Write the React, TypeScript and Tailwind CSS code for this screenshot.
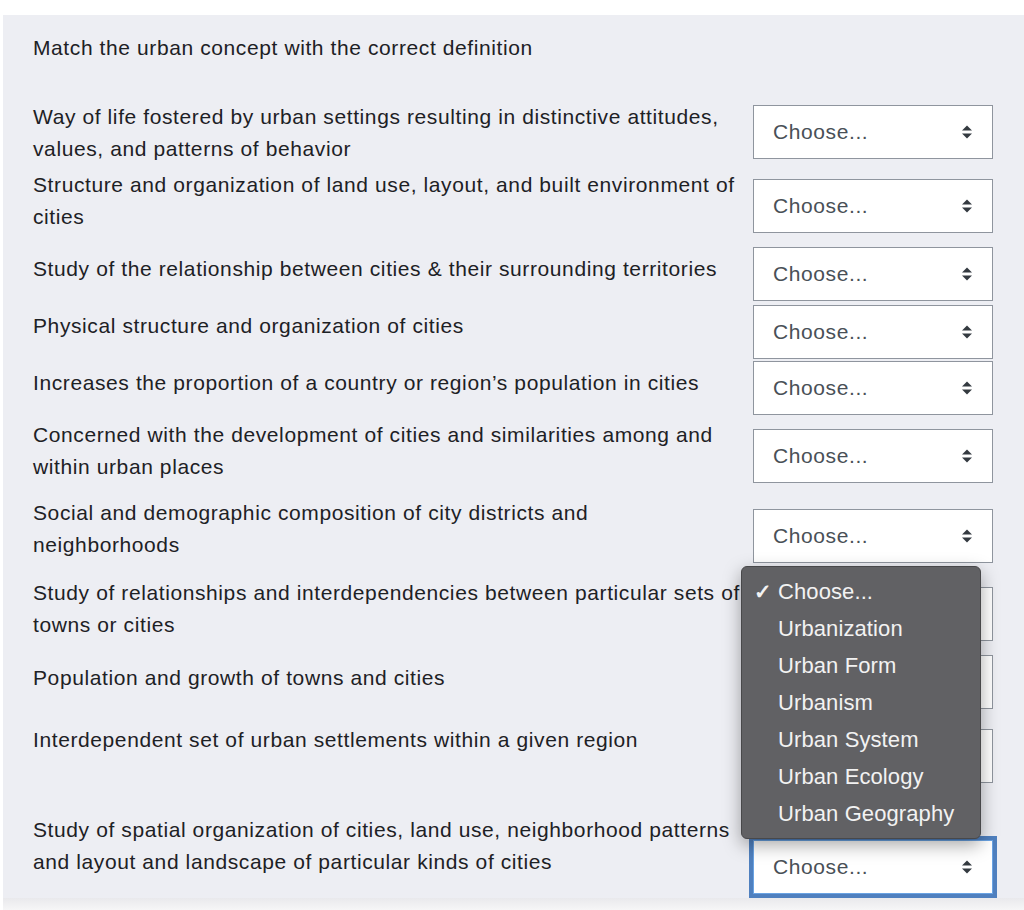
import React from "react";

type Row = {
  lines: string[];
  h: string;
  tm: string;
  sm: string;
  focused?: boolean;
};

const rows: Row[] = [
  {
    lines: [
      "Way of life fostered by urban settings resulting in distinctive attitudes,",
      "values, and patterns of behavior",
    ],
    h: "h-[68px]",
    tm: "mt-0",
    sm: "mt-[4px]",
  },
  {
    lines: [
      "Structure and organization of land use, layout, and built environment of",
      "cities",
    ],
    h: "h-[78px]",
    tm: "mt-0",
    sm: "mt-[10px]",
  },
  {
    lines: ["Study of the relationship between cities & their surrounding territories"],
    h: "h-[58px]",
    tm: "mt-[6px]",
    sm: "mt-0",
  },
  {
    lines: ["Physical structure and organization of cities"],
    h: "h-[56px]",
    tm: "mt-[5px]",
    sm: "mt-0",
  },
  {
    lines: ["Increases the proportion of a country or region\u2019s population in cities"],
    h: "h-[58px]",
    tm: "mt-[6px]",
    sm: "mt-0",
  },
  {
    lines: [
      "Concerned with the development of cities and similarities among and",
      "within urban places",
    ],
    h: "h-[78px]",
    tm: "mt-0",
    sm: "mt-[10px]",
  },
  {
    lines: ["Social and demographic composition of city districts and", "neighborhoods"],
    h: "h-[80px]",
    tm: "mt-0",
    sm: "mt-[12px]",
  },
  {
    lines: [
      "Study of relationships and interdependencies between particular sets of",
      "towns or cities",
    ],
    h: "h-[78px]",
    tm: "mt-0",
    sm: "mt-[10px]",
  },
  {
    lines: ["Population and growth of towns and cities"],
    h: "h-[69px]",
    tm: "mt-[7px]",
    sm: "mt-0",
  },
  {
    lines: ["Interdependent set of urban settlements within a given region"],
    h: "h-[90px]",
    tm: "mt-0",
    sm: "mt-[5px]",
  },
  {
    lines: [
      "Study of spatial organization of cities, land use, neighborhood patterns",
      "and layout and landscape of particular kinds of cities",
    ],
    h: "h-[84px]",
    tm: "mt-0",
    sm: "mt-[26px]",
    focused: true,
  },
];

const options = [
  "Choose...",
  "Urbanization",
  "Urban Form",
  "Urbanism",
  "Urban System",
  "Urban Ecology",
  "Urban Geography",
];

const Arrows = () => (
  <svg width="12" height="16" viewBox="0 0 12 16" className="shrink-0">
    <path d="M6 1.5 L11 6.5 H1 Z" fill="#343a40" />
    <path d="M6 14.5 L11 9.5 H1 Z" fill="#343a40" />
  </svg>
);

const SelectBox = ({ focused }: { focused?: boolean }) => (
  <div
    className={`w-[240px] h-[54px] bg-white flex items-center justify-between pl-[19px] pr-[19px] text-[21px] tracking-[0.6px] text-[#495057] ${
      focused
        ? "border border-[#6aa3e3] shadow-[0_0_0_4px_#4f80bf]"
        : "border border-[#8f959e]"
    }`}
  >
    <span>Choose...</span>
    <Arrows />
  </div>
);

export default function App() {
  return (
    <div className="bg-white w-[1024px] h-[910px] overflow-hidden font-['Liberation_Sans',Arial,sans-serif]">
      <div className="ml-[3px] mt-[15px] h-[883px] bg-[#edeef3] relative pl-[30px] pt-[17px] text-[#1d2125]">
        <p className="text-[21px] tracking-[0.6px] leading-[32px] whitespace-nowrap">
          Match the urban concept with the correct definition
        </p>

        <div className="mt-[37px] flex flex-col">
          {rows.map((r, i) => (
            <div key={i} className={`flex items-start ${r.h}`}>
              <div
                className={`w-[720px] text-[21px] tracking-[0.6px] leading-[32px] ${r.tm}`}
              >
                {r.lines.map((l, j) => (
                  <div key={j} className="whitespace-nowrap">
                    {l}
                  </div>
                ))}
              </div>
              <div className={r.sm}>
                <SelectBox focused={r.focused} />
              </div>
            </div>
          ))}
        </div>

        {/* open native popup for the last select */}
        <div className="absolute left-[738px] top-[551px] w-[240px] py-[6px] rounded-[6px] bg-[#616164] border border-[#48484a] shadow-[0_6px_18px_rgba(0,0,0,0.35)]">
          {options.map((o, i) => (
            <div
              key={o}
              className="h-[37px] flex items-center text-[22px] tracking-[0.1px] text-[#f2f2f2] relative pl-[36px]"
            >
              {i === 0 && (
                <span className="absolute left-[12px] text-[21px] font-bold">✓</span>
              )}
              {o}
            </div>
          ))}
        </div>
      </div>
      <div className="ml-[3px] h-[12px] bg-gradient-to-b from-[#e9e9ec] to-[#f6f6f7]" />
    </div>
  );
}
